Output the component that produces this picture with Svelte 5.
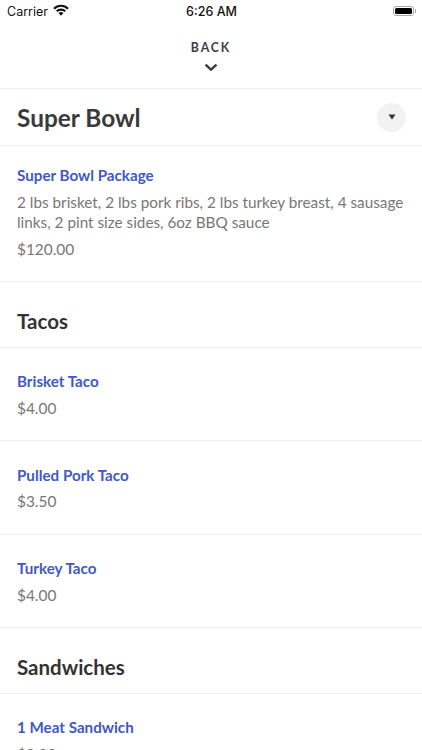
<script>
  const sections = [
    { title: 'Tacos', items: [
      { name: 'Brisket Taco', price: '$4.00' },
      { name: 'Pulled Pork Taco', price: '$3.50' },
      { name: 'Turkey Taco', price: '$4.00' }
    ]},
    { title: 'Sandwiches', items: [
      { name: '1 Meat Sandwich', price: '$9.00' }
    ]}
  ];
</script>

<div class="page">
  <div class="status">
    <div class="left">
      <span>Carrier</span>
      <svg width="16" height="12" viewBox="0 0 16 12" aria-hidden="true">
        <path d="M0.3 3.9A11 11 0 0 1 15.7 3.9L14.3 5.4A9 9 0 0 0 1.7 5.4Z" fill="#111"/>
        <path d="M3 6.6A7.2 7.2 0 0 1 13 6.6L11.6 8.1A5.2 5.2 0 0 0 4.4 8.1Z" fill="#111"/>
        <path d="M5.5 9.1A3.6 3.6 0 0 1 10.5 9.1L8 11.7Z" fill="#111"/>
      </svg>
    </div>
    <div class="time">6:26 AM</div>
    <div class="right">
      <div class="battery"><div class="charge"></div></div>
      <div class="nub"></div>
    </div>
  </div>

  <div class="back">
    <span class="back-label">BACK</span>
    <svg width="14" height="9" viewBox="0 0 14 9" aria-hidden="true">
      <path d="M1.5 1.6L7 6.6L12.5 1.6" fill="none" stroke="#3a3a3a" stroke-width="2.4"/>
    </svg>
  </div>

  <div class="main-head">
    <h1>Super Bowl</h1>
    <div class="toggle">
      <svg width="8" height="6" viewBox="0 0 8 6" aria-hidden="true"><path d="M0.5 0.5H7.5L4 5.5Z" fill="#333"/></svg>
    </div>
  </div>

  <div class="item first">
    <div class="name">Super Bowl Package</div>
    <div class="desc">2 lbs brisket, 2 lbs pork ribs, 2 lbs turkey breast, 4 sausage links, 2 pint size sides, 6oz BBQ sauce</div>
    <div class="price">$120.00</div>
  </div>

  {#each sections as s}
    <h2>{s.title}</h2>
    {#each s.items as it}
      <div class="item">
        <div class="name">{it.name}</div>
        <div class="price">{it.price}</div>
      </div>
    {/each}
  {/each}
</div>

<style>
  :global(body) { margin: 0; background: #fff; overflow: hidden; }
  .page { height: 750px; overflow: hidden; font-family: Lato, "Noto Sans", sans-serif; color: #333; background: #fff; }
  .status { height: 22px; display: grid; grid-template-columns: 1fr auto 1fr; align-items: center; padding: 0 6px 0 7px; font-family: Inter, "Liberation Sans", sans-serif; color: #111; font-size: 12.5px; }
  .left { display: flex; align-items: center; gap: 5px; }
  .left svg { margin-top: -3px; }
  .time { font-weight: 500; font-size: 12.5px; }
  .right { display: flex; justify-content: flex-end; align-items: center; gap: 1px; }
  .battery { width: 21px; height: 10px; border: 1px solid #a8a8a8; border-radius: 3px; padding: 1px; box-sizing: border-box; }
  .charge { height: 100%; background: #000; border-radius: 1.5px; }
  .nub { width: 1px; height: 4px; background: #a8a8a8; }
  .back { border-bottom: 1px solid #eee; display: flex; flex-direction: column; align-items: center; padding-top: 18px; height: 48px; }
  .back-label { font-size: 12.3px; font-weight: 700; letter-spacing: 1.9px; line-height: 15px; color: #3d3d3d; }
  .back svg { margin-top: 7.5px; }
  .main-head { height: 56px; border-bottom: 1px solid #eee; display: flex; align-items: center; justify-content: space-between; padding: 0 16px 0 17px; }
  h1 { margin: 0; font-size: 24.4px; font-weight: 700; color: #3a3a3a; }
  .toggle { width: 29px; height: 29px; border-radius: 50%; background: #f2f2f2; display: flex; align-items: center; justify-content: center; }
  h2 { margin: 0; height: 64.3px; line-height: 78px; border-bottom: 1px solid #eee; padding-left: 17px; font-size: 20.5px; font-weight: 700; color: #333; overflow: hidden; }
  .item { padding: 23.5px 17px 0; height: 69.1px; border-bottom: 1px solid #eee; }
  .item.first { height: 116.3px; padding-top: 19px; }
  .name { font-size: 15.2px; font-weight: 700; line-height: 20px; color: #4059c4; }
  .desc { font-size: 15.3px; line-height: 20px; color: #777; margin-top: 7px; }
  .price { font-size: 15.4px; line-height: 20px; color: #777; margin-top: 6.6px; }
  .first .price { margin-top: 6.5px; }
</style>
